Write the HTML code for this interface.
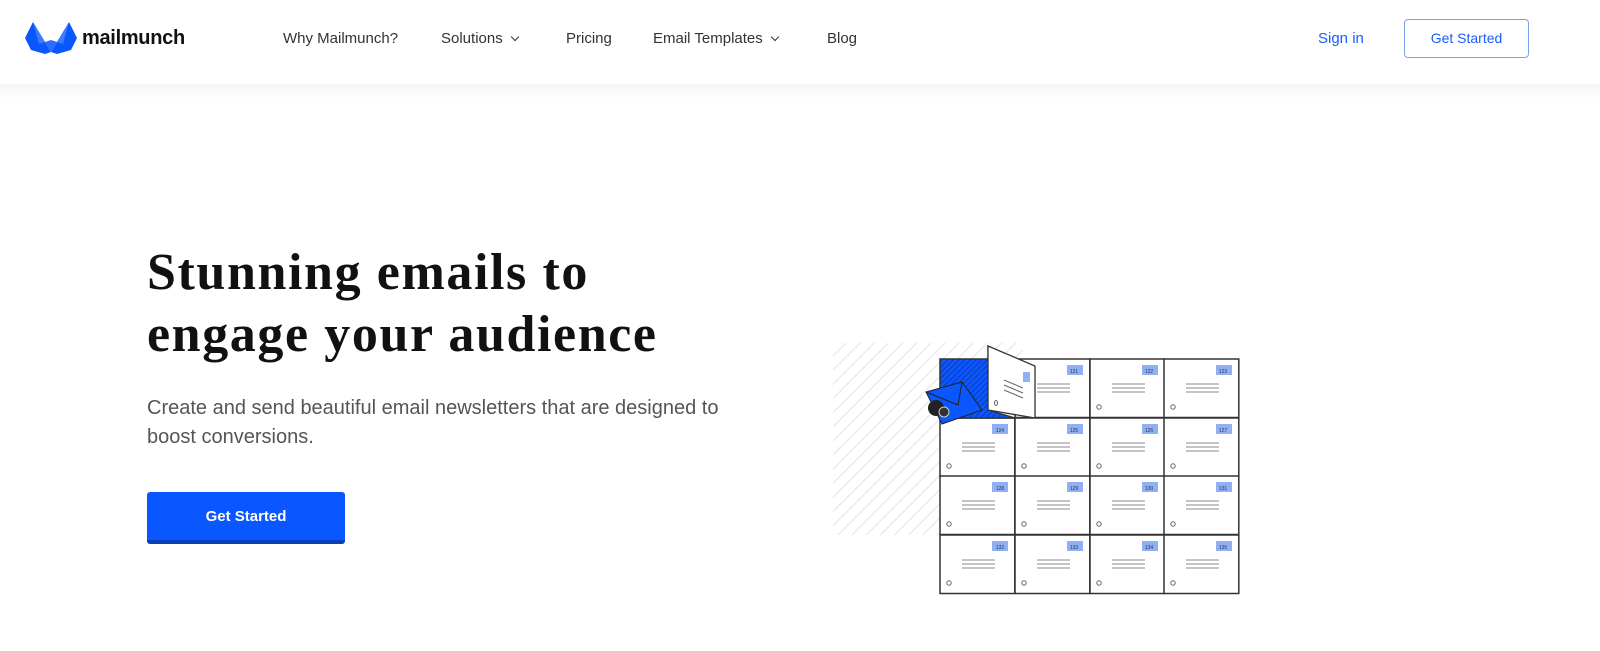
<!DOCTYPE html>
<html><head><meta charset="utf-8"><style>
*{margin:0;padding:0;box-sizing:border-box}
body{width:1600px;height:651px;overflow:hidden;background:#fff;font-family:"Liberation Sans",sans-serif;position:relative}
.hdr{position:absolute;left:0;top:0;width:1600px;height:84px;background:#fff;box-shadow:0 4px 14px rgba(0,0,0,0.05)}
.band{position:absolute;left:0;top:84px;width:1600px;height:16px;background:linear-gradient(#f6f6f6,#fff)}
.nav{position:absolute;top:30px;font-size:15px;color:#333}
.chev{display:inline-block;width:6px;height:6px;border-right:1.6px solid #333;border-bottom:1.6px solid #333;transform:rotate(45deg);margin-left:9px;position:relative;top:-3px}
h1{position:absolute;left:147px;top:242px;font-family:"Liberation Serif",serif;font-weight:bold;font-size:52px;line-height:62px;color:#111;letter-spacing:1.6px;white-space:nowrap}
p.sub{position:absolute;left:147px;top:394px;font-size:20px;line-height:29px;color:#555;width:612px}
.btn{position:absolute;left:147px;top:492px;width:198px;height:52px;background:#0a57ff;border-bottom:4px solid #0a3fb8;border-radius:3px;color:#fff;font-weight:bold;font-size:15px;text-align:center;line-height:49px}
</style></head><body>
<div class="hdr"></div><div class="band"></div>
<svg style="position:absolute;left:25px;top:20px" width="52" height="36" viewBox="0 0 52 36">
<polygon points="0,18 8,2 20,22 26,32 20,34 6,30" fill="#0a57ff"/>
<polygon points="52,18 44,2 32,22 26,32 32,34 46,30" fill="#0a57ff"/>
<polygon points="8,2 20,22 14,24" fill="#3d7bff"/><polygon points="44,2 32,22 38,24" fill="#3d7bff"/>
<polygon points="20,22 26,32 32,22 26,20" fill="#2d6cff"/>
</svg>
<div style="position:absolute;left:82px;top:27px;font-size:20px;font-weight:bold;color:#111;letter-spacing:-0.3px">mailmunch</div>
<div class="nav" style="left:283px">Why Mailmunch?</div>
<div class="nav" style="left:441px">Solutions<span class="chev"></span></div>
<div class="nav" style="left:566px">Pricing</div>
<div class="nav" style="left:653px">Email Templates<span class="chev"></span></div>
<div class="nav" style="left:827px">Blog</div>
<div class="nav" style="left:1318px;color:#1a5cff">Sign in</div>
<div style="position:absolute;left:1404px;top:19px;width:125px;height:39px;border:1.5px solid #7a9ef5;border-radius:4px;color:#1a5cff;font-size:14px;text-align:center;line-height:36px">Get Started</div>
<h1>Stunning emails to<br>engage your audience</h1>
<p class="sub">Create and send beautiful email newsletters that are designed to boost conversions.</p>
<div class="btn">Get Started</div>
<svg style="position:absolute;left:830px;top:330px" width="420" height="270" viewBox="0 0 420 270">
<defs>
<pattern id="h" width="10" height="10" patternUnits="userSpaceOnUse" patternTransform="rotate(45)"><line x1="0" y1="0" x2="0" y2="10" stroke="#e4e4e4" stroke-width="2"/></pattern>
<pattern id="hb" width="4" height="4" patternUnits="userSpaceOnUse" patternTransform="rotate(45)"><rect width="4" height="4" fill="#0a57ff"/><line x1="0" y1="0" x2="0" y2="4" stroke="#0a2a80" stroke-width="1.2"/></pattern>
<g id="c"><rect x="0" y="0" width="74.8" height="58.5" fill="#fff" stroke="#333" stroke-width="1.5"/><rect x="52" y="6" width="16" height="10" fill="#8fb0f5"/><line x1="22" y1="25" x2="55" y2="25" stroke="#888" stroke-width="1"/><line x1="22" y1="29" x2="55" y2="29" stroke="#888" stroke-width="1"/><line x1="22" y1="33" x2="55" y2="33" stroke="#888" stroke-width="1"/><circle cx="9" cy="48" r="2.2" fill="none" stroke="#666"/></g>
</defs>
<rect x="3" y="13" width="190" height="192" fill="url(#h)"/>
<g font-size="5" fill="#334" text-anchor="middle" font-family="Liberation Sans">
<use href="#c" x="185" y="29"/><text x="244" y="43">121</text>
<use href="#c" x="260" y="29"/><text x="319" y="43">122</text>
<use href="#c" x="334" y="29"/><text x="393" y="43">123</text>
<use href="#c" x="110" y="88"/><text x="170" y="102">124</text>
<use href="#c" x="185" y="88"/><text x="244" y="102">125</text>
<use href="#c" x="260" y="88"/><text x="319" y="102">126</text>
<use href="#c" x="334" y="88"/><text x="393" y="102">127</text>
<use href="#c" x="110" y="146"/><text x="170" y="160">128</text>
<use href="#c" x="185" y="146"/><text x="244" y="160">129</text>
<use href="#c" x="260" y="146"/><text x="319" y="160">130</text>
<use href="#c" x="334" y="146"/><text x="393" y="160">131</text>
<use href="#c" x="110" y="205"/><text x="170" y="219">132</text>
<use href="#c" x="185" y="205"/><text x="244" y="219">133</text>
<use href="#c" x="260" y="205"/><text x="319" y="219">134</text>
<use href="#c" x="334" y="205"/><text x="393" y="219">135</text>
</g>
<rect x="110" y="29" width="75" height="59" fill="url(#hb)" stroke="#333" stroke-width="1.5"/>
<polygon points="96,62 132,52 152,80 112,94" fill="#0a57ff" stroke="#222"/>
<polyline points="96,62 128,75 132,52" fill="none" stroke="#222"/>
<polygon points="158,16 185,29 185,88 158,80" fill="#fff" stroke="#333" stroke-width="1.3"/>
<polygon points="158,16 205,36 205,88 158,80" fill="#fff" stroke="#333" stroke-width="1.3"/>
<rect x="193" y="42" width="7" height="10" fill="#8fb0f5"/>
<line x1="174" y1="50" x2="193" y2="58" stroke="#666"/><line x1="174" y1="55" x2="193" y2="63" stroke="#666"/><line x1="174" y1="60" x2="193" y2="68" stroke="#666"/>
<ellipse cx="166" cy="73" rx="1.5" ry="2.5" fill="none" stroke="#666"/>
<circle cx="106" cy="78" r="8" fill="#222"/><circle cx="114" cy="82" r="5" fill="#333" stroke="#ccc"/>
</svg>
</body></html>
